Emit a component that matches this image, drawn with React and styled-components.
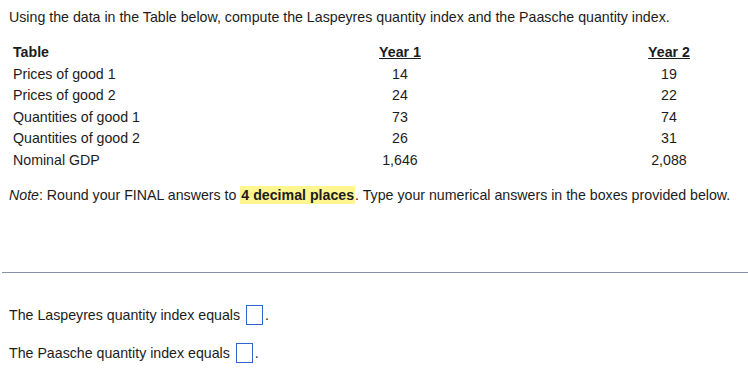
import React from 'react';
import styled, { createGlobalStyle } from 'styled-components';

const GlobalStyle = createGlobalStyle`
  body {
    margin: 0;
    background: #fff;
    font-family: "Liberation Sans", Arial, sans-serif;
    font-size: 14.2px;
    color: #1c1c1c;
  }
`;

const Page = styled.div`
  width: 748px;
  height: 386px;
  overflow: hidden;
`;

const Question = styled.div`
  padding: 9px 9px 0 9px;
`;

const Intro = styled.p`
  margin: 0;
  line-height: 16px;
`;

const DataTable = styled.div`
  display: grid;
  grid-template-columns: 320px 134px 162px 80px;
  margin: 17px 0 0 4px;
  line-height: 21.6px;
`;

const Cell = styled.div`
  text-align: ${(p) => (p.$num ? 'center' : 'left')};
  font-weight: ${(p) => (p.$head ? 700 : 400)};
  text-decoration: ${(p) => (p.$under ? 'underline' : 'none')};
  grid-column: ${(p) => p.$col || 'auto'};
`;

const Note = styled.p`
  margin: 15px 0 0 0;
  line-height: 16px;
`;

const Mark = styled.strong`
  background: #fff68f;
  padding: 1px 1px;
`;

const Divider = styled.hr`
  margin: 69px 0 0 2px;
  border: 0;
  border-top: 1px solid #8a90a8;
`;

const Answers = styled.div`
  padding: 31px 9px 0 9px;
  display: flex;
  flex-direction: column;
  gap: 16px;
`;

const AnswerLine = styled.div`
  display: flex;
  align-items: center;
  line-height: 22px;
`;

const AnswerBox = styled.span`
  display: inline-block;
  width: 15px;
  height: 18px;
  border: 1.5px solid #2f66cc;
  margin: 0 2px 0 6px;
`;

const rows = [
  ['Prices of good 1', '14', '19'],
  ['Prices of good 2', '24', '22'],
  ['Quantities of good 1', '73', '74'],
  ['Quantities of good 2', '26', '31'],
  ['Nominal GDP', '1,646', '2,088'],
];

export default function App() {
  return (
    <Page>
      <GlobalStyle />
      <Question>
        <Intro>
          Using the data in the Table below, compute the Laspeyres quantity index and the Paasche quantity index.
        </Intro>
        <DataTable>
          <Cell $head>Table</Cell>
          <Cell $head $under $num>Year 1</Cell>
          <Cell $head $under $num $col="4">Year 2</Cell>
          {rows.map(([label, y1, y2]) => (
            <React.Fragment key={label}>
              <Cell>{label}</Cell>
              <Cell $num>{y1}</Cell>
              <Cell $num $col="4">{y2}</Cell>
            </React.Fragment>
          ))}
        </DataTable>
        <Note>
          <em>Note</em>: Round your FINAL answers to <Mark>4 decimal places</Mark>. Type your numerical answers in the boxes provided below.
        </Note>
      </Question>
      <Divider />
      <Answers>
        <AnswerLine>
          The Laspeyres quantity index equals<AnswerBox />.
        </AnswerLine>
        <AnswerLine>
          The Paasche quantity index equals<AnswerBox />.
        </AnswerLine>
      </Answers>
    </Page>
  );
}
